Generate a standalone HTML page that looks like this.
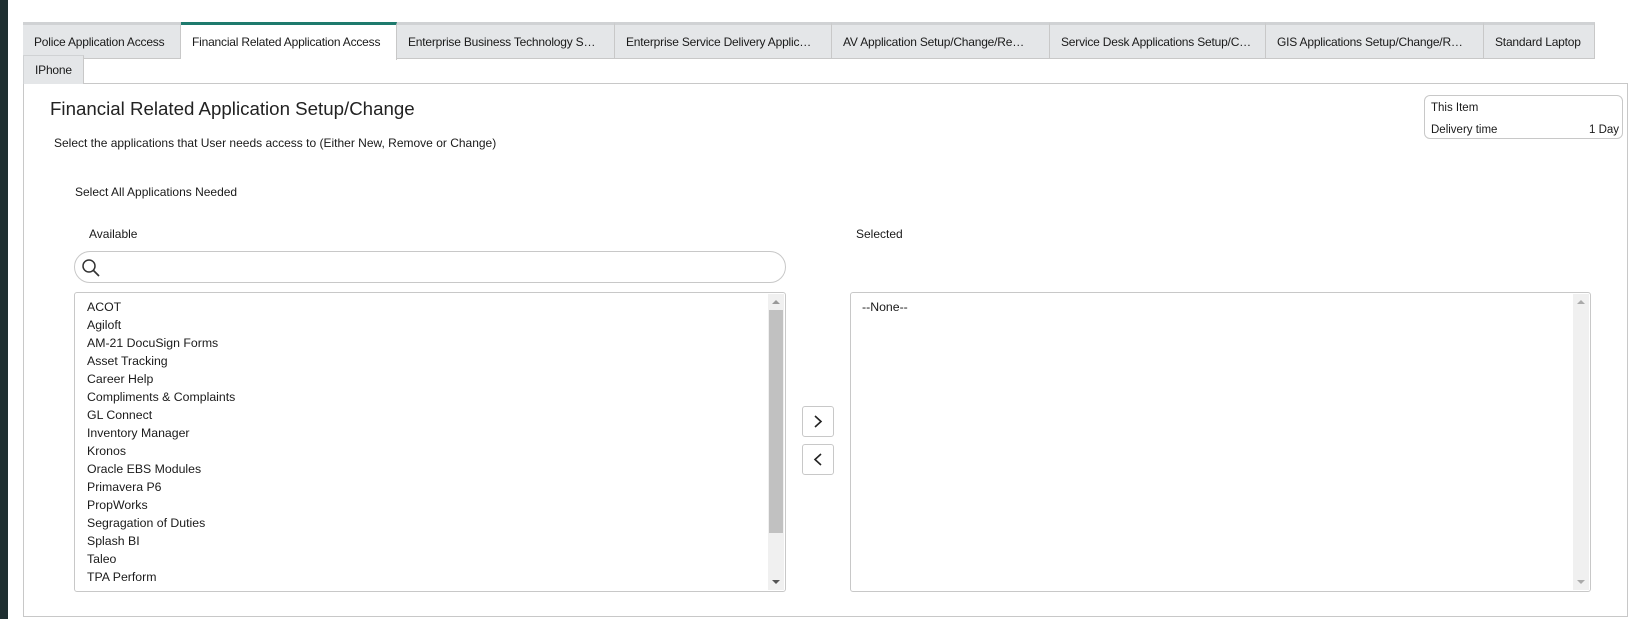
<!DOCTYPE html>
<html><head><meta charset="utf-8"><style>
*{box-sizing:border-box;margin:0;padding:0}
body{width:1629px;height:619px;background:#fff;position:relative;overflow:hidden;font-family:"Liberation Sans",sans-serif;color:#1a1a1a;font-size:12px}
.strip{position:absolute;left:0;top:0;width:8px;height:619px;background:#1f2f31}
.tab{position:absolute;height:37px;background:#e4e6e8;border-top:3px solid #d0d2d4;border-right:1px solid #c8c8c8;border-bottom:1px solid #c8c8c8;padding:10px 11px 0;white-space:nowrap;overflow:hidden;font-size:12px;letter-spacing:-0.2px}
.tab.act{background:#fff;border-top:3px solid #1e7a6d;border-bottom:none}
.abs{position:absolute;white-space:nowrap}
.panel{position:absolute;left:23px;top:83px;width:1605px;height:534px;border:1px solid #c8c8c8}
.box{position:absolute;border:1px solid #c8c8c8;border-radius:3px;background:#fff}
.sb{position:absolute;right:1px;top:1px;bottom:1px;width:16px;background:#f0f0f0}
.btn{position:absolute;width:32px;height:31px;border:1px solid #c8c8c8;border-radius:3px;background:#fff}
</style></head><body>
<div class="strip"></div>
<div class="panel"></div>
<div class="tab" style="left:23px;top:22px;width:158px">Police Application Access</div>
<div class="tab act" style="left:181px;top:22px;width:216px;height:38px">Financial Related Application Access</div>
<div class="tab" style="left:397px;top:22px;width:218px">Enterprise Business Technology S…</div>
<div class="tab" style="left:615px;top:22px;width:217px">Enterprise Service Delivery Applic…</div>
<div class="tab" style="left:832px;top:22px;width:218px">AV Application Setup/Change/Re…</div>
<div class="tab" style="left:1050px;top:22px;width:216px">Service Desk Applications Setup/C…</div>
<div class="tab" style="left:1266px;top:22px;width:218px">GIS Applications Setup/Change/R…</div>
<div class="tab" style="left:1484px;top:22px;width:111px">Standard Laptop</div>
<div class="tab" style="left:23px;top:55px;width:61px;height:29px;border-top:1px solid #d0d2d4;padding-top:7px;border-left:1px solid #d0d2d4;border-bottom:none">IPhone</div>
<div class="abs" style="left:50px;top:98px;font-size:18.7px;color:#222">Financial Related Application Setup/Change</div>
<div class="abs" style="left:54px;top:136px;font-size:12px">Select the applications that User needs access to (Either New, Remove or Change)</div>
<div class="box" style="left:1424px;top:95px;width:199px;height:44px;border-radius:6px"></div>
<div class="abs" style="left:1431px;top:102px;font-size:11.5px">This Item</div>
<div class="abs" style="left:1431px;top:124px;font-size:11.5px">Delivery time</div>
<div class="abs" style="left:1589px;top:124px;font-size:11.5px">1 Day</div>
<div class="abs" style="left:75px;top:185px">Select All Applications Needed</div>
<div class="abs" style="left:89px;top:227px">Available</div>
<div class="abs" style="left:856px;top:227px">Selected</div>
<div class="box" style="left:74px;top:251px;width:712px;height:32px;border-radius:16px"></div>
<svg class="abs" style="left:80px;top:257px" width="22" height="22" viewBox="0 0 22 22"><circle cx="9" cy="9" r="6" fill="none" stroke="#333" stroke-width="1.5"/><line x1="13.5" y1="13.5" x2="19" y2="19" stroke="#333" stroke-width="1.7"/></svg>
<div class="box" style="left:74px;top:292px;width:712px;height:300px">
<div class="sb"><div style="position:absolute;left:1px;top:16px;width:14px;height:223px;background:#c1c1c1"></div>
<div style="position:absolute;left:4px;top:6px;border:4px solid transparent;border-bottom:4px solid #999;border-top:none"></div>
<div style="position:absolute;left:4px;bottom:6px;border:4px solid transparent;border-top:4px solid #555;border-bottom:none"></div></div>
<div style="position:absolute;left:12px;top:5px;line-height:18px;font-size:12.3px">ACOT<br>Agiloft<br>AM-21 DocuSign Forms<br>Asset Tracking<br>Career Help<br>Compliments &amp; Complaints<br>GL Connect<br>Inventory Manager<br>Kronos<br>Oracle EBS Modules<br>Primavera P6<br>PropWorks<br>Segragation of Duties<br>Splash BI<br>Taleo<br>TPA Perform</div>
</div>
<div class="btn" style="left:802px;top:406px"><svg width="30" height="29" viewBox="0 0 30 29"><path d="M12 9l6 5.5-6 5.5" fill="none" stroke="#222" stroke-width="1.6"/></svg></div>
<div class="btn" style="left:802px;top:444px"><svg width="30" height="29" viewBox="0 0 30 29"><path d="M18 9l-6 5.5 6 5.5" fill="none" stroke="#222" stroke-width="1.6"/></svg></div>
<div class="box" style="left:850px;top:292px;width:741px;height:300px">
<div class="sb"><div style="position:absolute;left:4px;top:6px;border:4px solid transparent;border-bottom:4px solid #aaa;border-top:none"></div>
<div style="position:absolute;left:4px;bottom:6px;border:4px solid transparent;border-top:4px solid #aaa;border-bottom:none"></div></div>
<div style="position:absolute;left:11px;top:5px;line-height:18px;font-size:12.3px">--None--</div>
</div>
</body></html>
